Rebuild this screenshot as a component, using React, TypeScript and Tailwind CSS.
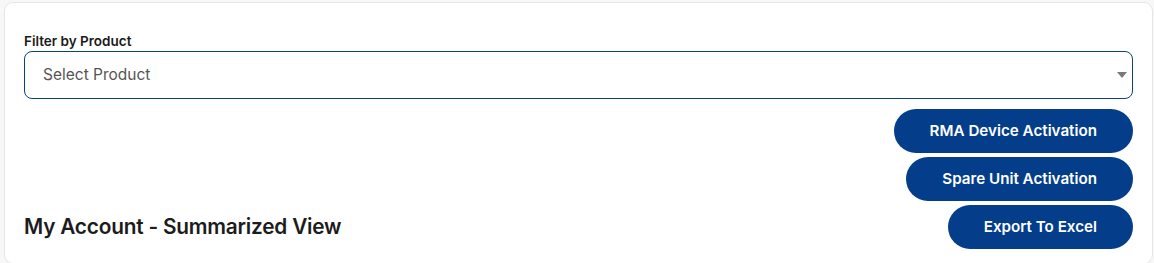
import React from "react";

export default function App() {
  return (
    <div className="min-h-[263px] bg-[#f7f7f7] pl-[4px] pr-[1px] pt-[2px]" style={{ fontFamily: "Inter, 'Noto Sans', sans-serif" }}>
      <div className="rounded-[9px] border border-[#e6e6e6] bg-white px-[19px] pt-[30px] pb-[14px]">
        <label className="block text-[13.5px] font-semibold leading-[16px] text-[#1a1a1a] mb-[2px]">Filter by Product</label>
        <div className="relative">
          <div className="flex h-[48px] items-center rounded-[8px] border border-[#0b3f86] pl-[18px] pr-[10px] text-[15.5px] text-[#555]">
            Select Product
          </div>
          <svg className="absolute right-[6px] top-[21px]" width="10" height="6" viewBox="0 0 10 6">
            <path d="M0 0 L10 0 L5 6 Z" fill="#7a7a7a" />
          </svg>
        </div>
        <div className="mt-[10px] flex items-end justify-between">
          <h2 className="mb-[8px] text-[20.8px] font-semibold leading-[28px] tracking-[-0.2px] text-[#1c1c1c]">My Account - Summarized View</h2>
          <div className="flex flex-col items-end gap-[4px]">
            <button className="h-[44px] rounded-full bg-[#043e8a] px-[36px] text-[15.2px] font-semibold text-white">RMA Device Activation</button>
            <button className="h-[44px] rounded-full bg-[#043e8a] px-[36px] text-[15.2px] font-semibold text-white">Spare Unit Activation</button>
            <button className="h-[44px] rounded-full bg-[#043e8a] px-[36px] text-[15.2px] font-semibold text-white">Export To Excel</button>
          </div>
        </div>
      </div>
    </div>
  );
}
